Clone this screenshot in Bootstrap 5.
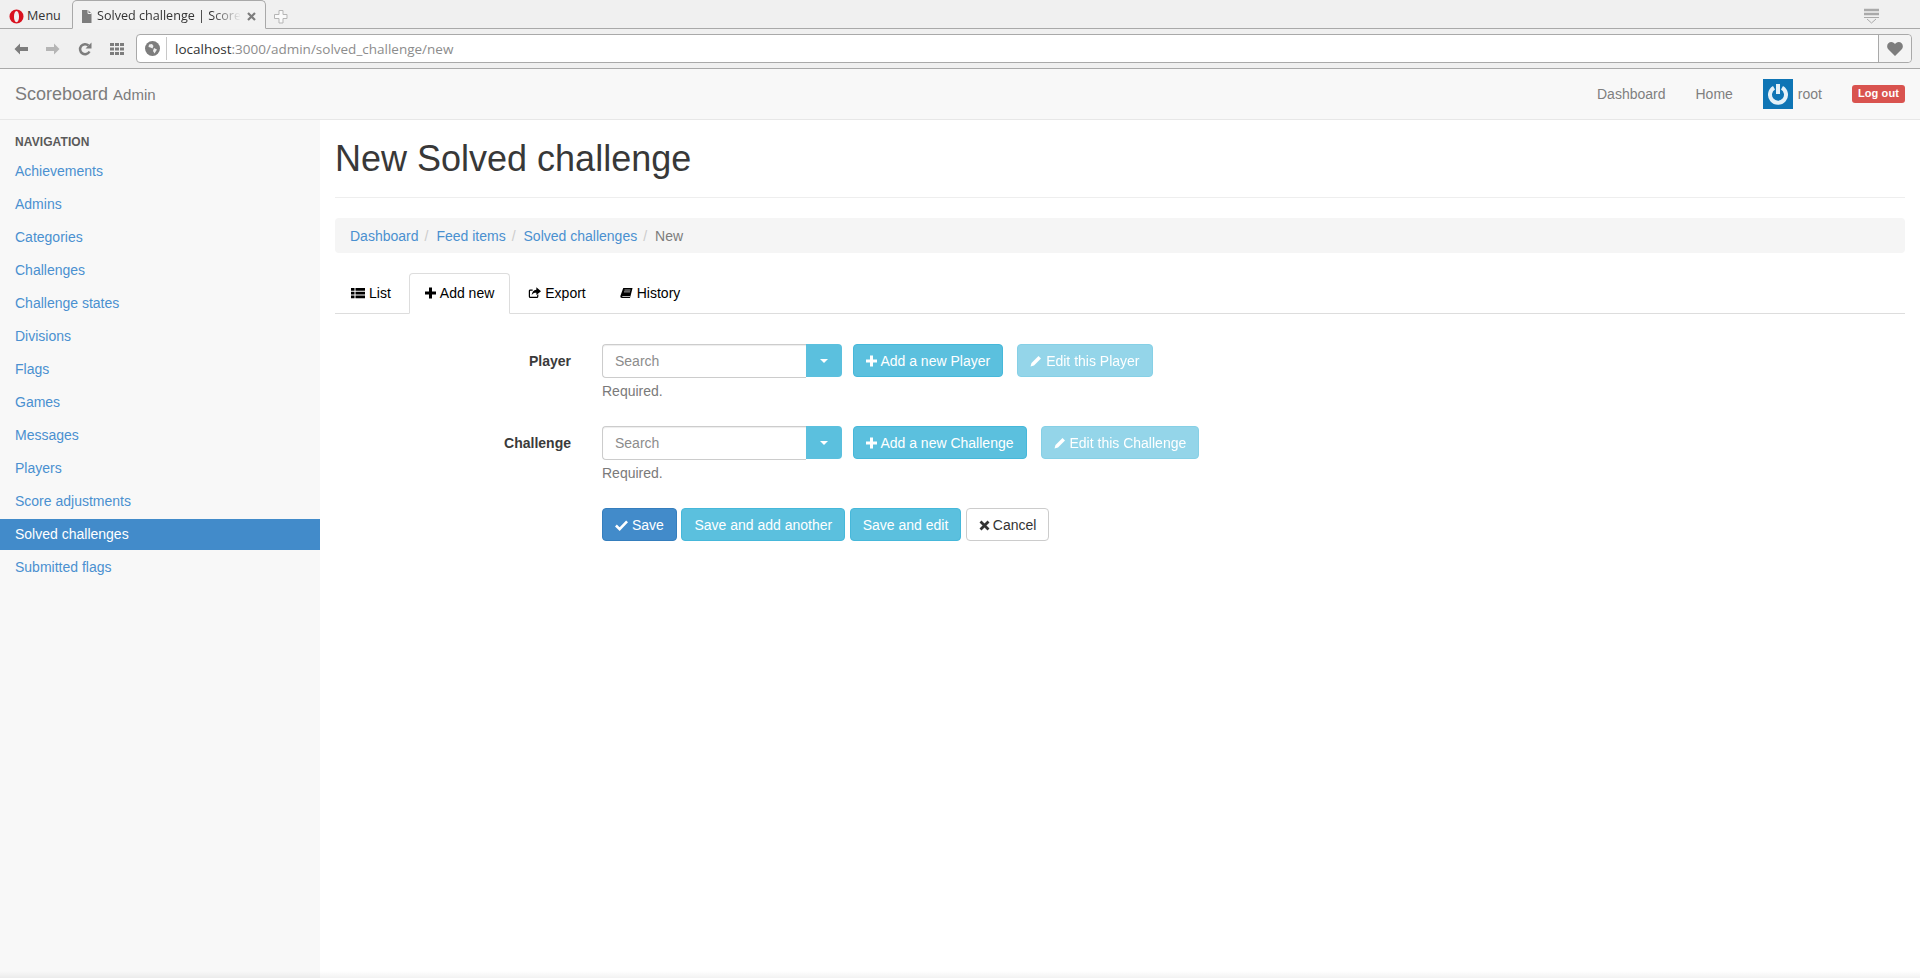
<!DOCTYPE html>
<html lang="en">
<head>
<meta charset="utf-8">
<title>Solved challenge | Scoreboard</title>
<link href="https://cdn.jsdelivr.net/npm/bootstrap@5.3.0/dist/css/bootstrap.min.css" rel="stylesheet">
<style>
html,body{height:978px;overflow:hidden}
body{font-family:"Liberation Sans",Arial,sans-serif;font-size:14px;line-height:20px;color:#333;background:#fff}
svg{display:block;flex:none}
.shell{height:978px;position:relative}
/* browser chrome */
.tabstrip{height:29px;background:#f0f0f0;border-bottom:1px solid #a9a9a9;padding-left:9px;font-family:"Open Sans",sans-serif;font-size:12.600px;color:#333}
.opmenu{width:63px;height:28px;padding-top:4px;gap:3px}
.optab{width:194px;height:29px;background:#f2f2f2;border:1px solid #a9a9a9;border-bottom-color:#f2f2f2;border-radius:5px 5px 0 0;padding:3px 9px 0 8px;gap:5px;top:1px}
.optab-title{white-space:nowrap;flex:none;-webkit-mask-image:linear-gradient(90deg,#000 80%,transparent);mask-image:linear-gradient(90deg,#000 80%,transparent)}
.addrbar{height:40px;background:#f0f0f0;border-bottom:1px solid #a9a9a9;padding:0 8px 0 14px}
.addrbox{height:29px;flex:1;margin-left:12px;background:#fff;border:1px solid #a9a9a9;border-radius:4px;font-family:"Open Sans",sans-serif;font-size:13.500px}
.addr-sep{width:1px;height:23px;background:#c8c8c8;margin:0 8px 0 6px}
.addr-dim{color:#8c8c8c}
.heartbox{width:33px;height:27px;background:#f4f4f4;border-left:1px solid #a9a9a9;border-radius:0 4px 4px 0}
.navbtns{gap:18px}
/* app navbar */
.appbar{height:51px;background:#f8f8f8;border-bottom:1px solid #e7e7e7;padding:0 15px;flex-wrap:nowrap}
.appbrand{font-size:18px;color:#7c7c7c;padding:0;margin:0}
.appbrand small{font-size:15px;color:#7c7c7c}
.applink{color:#7f7f7f;text-decoration:none}
.appavatar{width:30px;height:30px;background:#0f75b5}
.logout-lbl{background:#d9534f;color:#fff;font-size:11px;font-weight:700;line-height:11px;padding:3px 6px 4px;border-radius:3px;text-decoration:none;letter-spacing:.1px}
/* sidebar */
.sidecol{width:320px;flex:none;background:#f8f8f8;padding-top:12px;height:858px}
.sidehead{font-size:12px;font-weight:700;color:#5a5a5a;text-transform:uppercase;padding:0 15px;line-height:20px;margin-bottom:4px;letter-spacing:.1px}
.sidelink{display:block;height:31px;line-height:30px;padding:0 15px;color:#4a90d0;text-decoration:none;margin-bottom:2px}
.sidelink.on{background:#428bca;color:#fff}
/* main */
.maincol{flex:1;padding:0 15px;min-width:0}
.pagehead{padding-top:19px;height:78px;border-bottom:1px solid #eee}
.pagehead h1{font-size:36px;line-height:40px;font-weight:500;margin:0;color:#383838}
.crumbs{margin:20px 0 20px;height:35px;background:#f5f5f5;border-radius:4px;padding:0 15px;--bs-breadcrumb-margin-bottom:0;align-items:center}
.crumbs a{color:#4a90d0;text-decoration:none}
.crumbs .breadcrumb-item.active{color:#7c7c7c}
.crumbs .breadcrumb-item+.breadcrumb-item{padding-left:6px}
.crumbs .breadcrumb-item+.breadcrumb-item::before{color:#ccc;padding-right:8px}
.pagetabs{--bs-nav-tabs-border-color:#ddd;--bs-nav-tabs-border-radius:4px;height:41px;margin-bottom:30px}
.pagetabs .nav-link{color:#000;padding:9px 15px 10px;height:41px;margin-right:2px;line-height:20px;gap:4px;border-color:transparent}
.pagetabs .nav-link.active{color:#000;border-color:#ddd #ddd #fff}
.ficon{width:14px;height:14px;fill:currentColor}
.ficon-n{width:11px}
.ficon-p{width:12px}
.ficon-c{width:13px}
.formrow{margin-bottom:15px}
.fieldlabel{width:236px;flex:none;text-align:right;font-weight:700;padding-top:7px;margin-right:31px;line-height:20px;color:#3a3a3a}
.searchgrp{width:241px;flex:none}
.searchgrp .form-control{width:204px;flex:none;height:34px;font-size:14px;padding:6px 12px;border-color:#ccc;border-right:0;border-radius:4px 0 0 4px;color:#555;box-shadow:inset 0 1px 1px rgba(0,0,0,.075)}
.searchgrp .form-control::placeholder{color:#8c8c8c}
.caretbtn{width:37px;height:33px;background:#5bc0de;border-radius:0 4px 4px 0}
.caretbtn i{display:block;width:0;height:0;border-left:4px solid transparent;border-right:4px solid transparent;border-top:4px solid #fff}
.actbtn{height:33px;font-size:14px;line-height:20px;padding:6px 12px;border-radius:4px;gap:4px;--bs-btn-font-size:14px}
.btn-info.actbtn{background:#5bc0de;border-color:#46b8da;color:#fff}
.btn-primary.actbtn{background:#428bca;border-color:#357ebd;color:#fff}
.btn-light.actbtn{background:#fff;border-color:#ccc;color:#333}
.btn-light.actbtn.tight{gap:3px}
.actbtn.dim{opacity:.65}
.firstadd{margin-left:10px;gap:3.400px}
.secondedit{margin-left:14px}
.helpline{color:#7a7a7a;margin-top:3px;height:20px}
.btnrow{margin-left:267px;gap:4.500px;margin-top:0}
.rowbody{padding-bottom:10px}
.bottomshade{position:absolute;left:0;right:0;bottom:0;height:7px;background:linear-gradient(rgba(0,0,0,0),rgba(0,0,0,.05));pointer-events:none}
</style>
</head>
<body>
<div class="shell d-flex flex-column">

  <div class="tabstrip d-flex align-items-end">
    <div class="opmenu d-flex align-items-center">
      <svg width="15" height="15" viewBox="0 0 16 16"><path fill-rule="evenodd" d="M8 .5a7.500 7.500 0 1 0 0 15 7.500 7.500 0 0 0 0-15zM8 2c1.700 0 2.700 2.700 2.700 6S9.700 14 8 14 5.300 11.300 5.300 8 6.300 2 8 2z" fill="#d9121f"/></svg>
      <span>Menu</span>
    </div>
    <div class="optab d-flex align-items-center position-relative">
      <svg width="11" height="13" viewBox="0 0 11 13"><path d="M1 0h6l3.500 3.500V13H1z" fill="#7d7d7d"/><path d="M7 0v3.500h3.500" fill="none" stroke="#f2f2f2"/></svg>
      <span class="optab-title">Solved challenge | Score</span>
      <svg class="ms-auto" width="11" height="11" viewBox="0 0 11 11"><path d="M2 2l7 7M9 2l-7 7" stroke="#7d7d7d" stroke-width="2.200"/></svg>
    </div>
    <svg class="ms-2 mb-1" width="14" height="14" viewBox="0 0 14 14"><path d="M5 .5h4v4h4v4H9v4.500H5V8.500H.5v-4H5z" fill="#fafafa" stroke="#b5b5b5"/></svg>
    <svg class="ms-auto mb-1" style="margin-right:41px" width="15" height="16" viewBox="0 0 15 16"><path d="M0 2h15M0 6h15" stroke="#aaa" stroke-width="2.500" fill="none"/><path d="M0 9.500h15M3 11l4.500 4 4.500-4" stroke="#aaa" fill="none"/></svg>
  </div>

  <div class="addrbar d-flex align-items-center">
    <div class="navbtns d-flex align-items-center">
      <svg width="14" height="12" viewBox="0 0 14 12"><path d="M6 .5L.5 6 6 11.500V8h8V4H6z" fill="#7d7d7d"/></svg>
      <svg width="14" height="12" viewBox="0 0 14 12"><path d="M8 .5L13.500 6 8 11.500V8H0V4h8z" fill="#b5b5b5"/></svg>
      <svg width="14" height="14" viewBox="0 0 14 14"><path d="M11.500 9.500A5 5 0 1 1 10.500 3.500" fill="none" stroke="#7d7d7d" stroke-width="2.500"/><path d="M13.500.5v6h-6z" fill="#7d7d7d"/></svg>
      <svg width="14" height="12" viewBox="0 0 14 12"><path d="M0 0h4v3H0zM5 0h4v3H5zM10 0h4v3h-4zM0 4.500h4v3H0zM5 4.500h4v3H5zM10 4.500h4v3h-4zM0 9h4v3H0zM5 9h4v3H5zM10 9h4v3h-4z" fill="#7d7d7d"/></svg>
    </div>
    <div class="addrbox d-flex align-items-center">
      <svg class="ms-2" width="15" height="15" viewBox="0 0 15 15"><circle cx="7.500" cy="7.500" r="7.500" fill="#7d7d7d"/><path d="M4 3.500l3-.5 1.500 2-1 2.500-2-1-2-.5zM9 7l3 1.500-2.500 4-1.500-2.500z" fill="#eee"/></svg>
      <span class="addr-sep"></span>
      <span>localhost<span class="addr-dim">:3000/admin/solved_challenge/new</span></span>
      <div class="heartbox ms-auto d-flex align-items-center justify-content-center">
        <svg width="16" height="14" viewBox="0 0 16 14"><path d="M8 14L1.500 7.500C-1.500 4 1 0 4.300 0 6 0 7.300 1 8 2.200 8.700 1 10 0 11.700 0 15 0 17.500 4 14.500 7.500z" fill="#7d7d7d"/></svg>
      </div>
    </div>
  </div>

  <nav class="navbar appbar d-flex align-items-center justify-content-between">
    <a class="navbar-brand appbrand" href="#">Scoreboard <small>Admin</small></a>
    <div class="d-flex align-items-center">
      <a class="applink" style="margin-right:30px" href="#">Dashboard</a>
      <a class="applink" style="margin-right:30px" href="#">Home</a>
      <span class="appavatar d-flex align-items-center justify-content-center" style="margin-right:5px">
        <svg width="22" height="22" viewBox="0 0 22 22"><path d="M7 4.800a8 8 0 1 0 8 0" fill="none" stroke="#e4f1f8" stroke-width="4"/><path d="M11 1v10" stroke="#e4f1f8" stroke-width="4" fill="none"/></svg>
      </span>
      <a class="applink" style="margin-right:30px" href="#">root</a>
      <a class="logout-lbl" href="#">Log out</a>
    </div>
  </nav>

  <div class="d-flex flex-grow-1">
    <div class="sidecol">
      <div class="sidehead">Navigation</div>
      <a class="sidelink" href="#">Achievements</a>
      <a class="sidelink" href="#">Admins</a>
      <a class="sidelink" href="#">Categories</a>
      <a class="sidelink" href="#">Challenges</a>
      <a class="sidelink" href="#">Challenge states</a>
      <a class="sidelink" href="#">Divisions</a>
      <a class="sidelink" href="#">Flags</a>
      <a class="sidelink" href="#">Games</a>
      <a class="sidelink" href="#">Messages</a>
      <a class="sidelink" href="#">Players</a>
      <a class="sidelink" href="#">Score adjustments</a>
      <a class="sidelink on" href="#">Solved challenges</a>
      <a class="sidelink" href="#">Submitted flags</a>
    </div>

    <div class="maincol">
      <div class="pagehead"><h1>New Solved challenge</h1></div>

      <ol class="breadcrumb crumbs">
        <li class="breadcrumb-item"><a href="#">Dashboard</a></li>
        <li class="breadcrumb-item"><a href="#">Feed items</a></li>
        <li class="breadcrumb-item"><a href="#">Solved challenges</a></li>
        <li class="breadcrumb-item active">New</li>
      </ol>

      <ul class="nav nav-tabs pagetabs">
        <li class="nav-item"><a class="nav-link d-flex align-items-center" href="#"><svg class="ficon" viewBox="0 0 14 14"><path d="M0 2h3.500v2.800H0zM4.500 2H14v2.800H4.500zM0 5.700h3.500v2.800H0zM4.500 5.700H14v2.800H4.500zM0 9.400h3.500v2.800H0zM4.500 9.400H14v2.800H4.500z"/></svg>List</a></li>
        <li class="nav-item"><a class="nav-link active d-flex align-items-center" href="#"><svg class="ficon ficon-n" viewBox="0 0 11 14"><path d="M4 1.500h3v4h4v3H7v4H4v-4H0v-3h4z"/></svg>Add new</a></li>
        <li class="nav-item"><a class="nav-link d-flex align-items-center" href="#"><svg class="ficon ficon-c" viewBox="0 0 14 14"><path d="M10.500 8.500v2.300a1 1 0 0 1-1 1H2.500a1 1 0 0 1-1-1V4.800a1 1 0 0 1 1-1H5" fill="none" stroke="currentColor" stroke-width="1.300"/><path d="M9 .8L14 5 9 9.200V6.700C6.500 6.700 5 7.300 4 9.500 4 6 6 3.700 9 3.400z"/></svg>Export</a></li>
        <li class="nav-item"><a class="nav-link d-flex align-items-center" href="#"><svg class="ficon ficon-c" viewBox="0 0 14 14"><path d="M3.500 1.500H13.500L11 11.500a1 1 0 0 1-1 .9H2.200C1 12.400 0 11.500.5 10z"/><path d="M2.500 10.800h8.500" stroke="#fff" stroke-width=".8"/><path d="M4.800 3.800h6.500M4.300 5.800h6.500" stroke="#fff" stroke-width=".7"/></svg>History</a></li>
      </ul>

      <div class="formrow d-flex">
        <div class="fieldlabel">Player</div>
        <div class="rowbody">
          <div class="d-flex">
            <div class="searchgrp input-group">
              <input class="form-control" type="text" placeholder="Search">
              <span class="caretbtn d-flex align-items-center justify-content-center"><i></i></span>
            </div>
            <a class="btn btn-info actbtn firstadd d-inline-flex align-items-center" href="#"><svg class="ficon ficon-n" viewBox="0 0 11 14"><path d="M4 1.500h3v4h4v3H7v4H4v-4H0v-3h4z"/></svg>Add a new Player</a>
            <a class="btn btn-info actbtn dim secondedit d-inline-flex align-items-center" href="#"><svg class="ficon ficon-p" viewBox="0 0 12 14"><path d="M8.500 2L11 4.500 4 11.500 .5 12.500 1.500 9z"/></svg>Edit this Player</a>
          </div>
          <div class="helpline">Required.</div>
        </div>
      </div>

      <div class="formrow d-flex">
        <div class="fieldlabel">Challenge</div>
        <div class="rowbody">
          <div class="d-flex">
            <div class="searchgrp input-group">
              <input class="form-control" type="text" placeholder="Search">
              <span class="caretbtn d-flex align-items-center justify-content-center"><i></i></span>
            </div>
            <a class="btn btn-info actbtn firstadd d-inline-flex align-items-center" href="#"><svg class="ficon ficon-n" viewBox="0 0 11 14"><path d="M4 1.500h3v4h4v3H7v4H4v-4H0v-3h4z"/></svg>Add a new Challenge</a>
            <a class="btn btn-info actbtn dim secondedit d-inline-flex align-items-center" href="#"><svg class="ficon ficon-p" viewBox="0 0 12 14"><path d="M8.500 2L11 4.500 4 11.500 .5 12.500 1.500 9z"/></svg>Edit this Challenge</a>
          </div>
          <div class="helpline">Required.</div>
        </div>
      </div>

      <div class="btnrow d-flex">
        <a class="btn btn-primary actbtn d-inline-flex align-items-center" href="#"><svg class="ficon ficon-c" viewBox="0 0 14 14"><path d="M1 7.500l4 4 8-8.500" fill="none" stroke="currentColor" stroke-width="2.800"/></svg>Save</a>
        <a class="btn btn-info actbtn d-inline-flex align-items-center" href="#">Save and add another</a>
        <a class="btn btn-info actbtn d-inline-flex align-items-center" href="#">Save and edit</a>
        <a class="btn btn-light actbtn tight d-inline-flex align-items-center" href="#"><svg class="ficon ficon-n" viewBox="0 0 11 14"><path d="M1.500 3.500l8 8M9.500 3.500l-8 8" fill="none" stroke="currentColor" stroke-width="2.800"/></svg>Cancel</a>
      </div>
    </div>
  </div>
  <div class="bottomshade"></div>
</div>
<script src="https://cdn.jsdelivr.net/npm/bootstrap@5.3.0/dist/js/bootstrap.bundle.min.js"></script>
</body>
</html>
